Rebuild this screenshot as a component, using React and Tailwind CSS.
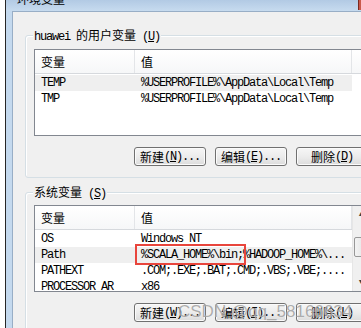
const MONO = "font-['Liberation_Mono','DejaVu_Sans_Mono',monospace] tracking-[-1.2px]";
const CJK = "font-['Noto_Sans_CJK_SC','Noto_Sans_CJK_JP',sans-serif]";

function M({ children }) {
  return <span className={MONO}>{children}</span>;
}
function C({ children }) {
  return <span className={CJK}>{children}</span>;
}

function Btn({ zh, k, dots }) {
  return (
    <div className="w-[72px] h-[19px] shrink-0 rounded-[3px] border border-[#707070] bg-gradient-to-b from-[#f6f6f6] via-[#ececec] to-[#dcdcdc] shadow-[inset_0_0_0_1px_#fbfbfb] flex items-center justify-center text-[12px] leading-none text-black">
      <C>{zh}</C>
      <M>
        {" "}(<span className="underline">{k}</span>){dots ? "..." : ""}
      </M>
    </div>
  );
}

function Header() {
  return (
    <div className="h-[24px] shrink-0 flex border-b border-[#d6d9dd] bg-gradient-to-b from-white to-[#f6f7f8]">
      <div className={`w-[100px] shrink-0 border-r border-[#e3e5e8] flex items-center pl-[6px] ${CJK}`}>变量</div>
      <div className={`w-[217px] shrink-0 border-r border-[#e3e5e8] flex items-center pl-[6px] ${CJK}`}>值</div>
      <div className="flex-1" />
    </div>
  );
}

function Row({ name, value, sel }) {
  return (
    <div className={`h-[16px] shrink-0 flex items-center ${sel ? "bg-[#efefef]" : ""} w-[317px]`}>
      <div className={`w-[100px] shrink-0 pl-[6px] whitespace-pre overflow-hidden ${MONO}`}>{name}</div>
      <div className={`w-[217px] shrink-0 pl-[6px] whitespace-pre overflow-hidden ${MONO}`}>{value}</div>
    </div>
  );
}

function GroupBox({ label, children, className = "" }) {
  return (
    <div className={`relative w-[350px] shrink-0 border border-[#d5dfe5] rounded-[3px] shadow-[inset_1px_1px_0_#ffffff] ${className}`}>
      <div className="absolute left-[7px] -top-[8px] bg-[#f0f0f0] px-px leading-[14px] text-[12px] whitespace-pre">
        {label}
      </div>
      {children}
    </div>
  );
}

export default function App() {
  return (
    <div className="relative w-[361px] h-[328px] overflow-hidden bg-white flex text-[12px] text-black">
      <div className="w-[5px] shrink-0 bg-white" />
      <div className="w-px shrink-0 bg-[#262626]" />
      <div className="flex-1 min-w-0 flex flex-col">
        <div className="h-[11px] shrink-0 flex bg-gradient-to-b from-[#b2cae4] to-[#c7dbef] overflow-hidden">
          <div className={`pl-[11px] -mt-[8px] leading-[14px] text-[12px] ${CJK}`}>环境变量</div>
          <div className="ml-auto w-[3px] h-[10px] bg-[#c9594a] border-l border-[#7a2a20]" />
        </div>
        <div className="flex-1 min-h-0 flex">
          <div className="w-[6px] shrink-0 bg-[#c4d9ee]" />
          <div className="flex-1 min-w-0 bg-[#f0f0f0] border-l border-t border-[#98aec6] pl-[12px] pt-[23px] flex flex-col overflow-hidden">
            <GroupBox
              label={
                <>
                  <M>huawei </M>
                  <C>的用户变量</C>
                  <M>
                    {" "}(<span className="underline">U</span>)
                  </M>
                </>
              }
            >
              <div className="pl-[8px] pt-[13px] pb-[11px] flex flex-col">
                <div className="h-[87px] w-[340px] border border-[#828790] bg-white flex flex-col overflow-hidden">
                  <Header />
                  <div className="pt-px flex flex-col">
                    <Row name="TEMP" value="%USERPROFILE%\AppData\Local\Temp" sel />
                    <Row name="TMP" value="%USERPROFILE%\AppData\Local\Temp" />
                  </div>
                </div>
                <div className="mt-[11px] ml-[100px] flex gap-[9px]">
                  <Btn zh="新建" k="N" dots />
                  <Btn zh="编辑" k="E" dots />
                  <Btn zh="删除" k="D" />
                </div>
              </div>
            </GroupBox>

            <GroupBox
              className="mt-[14px]"
              label={
                <>
                  <C>系统变量</C>
                  <M>
                    {" "}(<span className="underline">S</span>)
                  </M>
                </>
              }
            >
              <div className="pl-[8px] pt-[12px] pb-[11px] flex flex-col">
                <div className="h-[87px] w-[340px] border border-[#828790] bg-white flex overflow-hidden">
                  <div className="w-[317px] shrink-0 flex flex-col">
                    <Header />
                    <div className="pt-px flex flex-col">
                      <Row name="OS" value="Windows NT" />
                      <div className="relative">
                        <Row name="Path" value="%SCALA_HOME%\bin;%HADOOP_HOME%\..." sel />
                        <div className="absolute left-[100px] -top-[3px] w-[111px] h-[21px] border-2 border-[#e8453c]" />
                      </div>
                      <Row name="PATHEXT" value=".COM;.EXE;.BAT;.CMD;.VBS;.VBE;...." />
                      <Row name="PROCESSOR_AR" value="x86" />
                    </div>
                  </div>
                  <div className="w-[17px] shrink-0 bg-[#f0f0f0] border-l border-[#e6e6e6] flex flex-col">
                    <div className="h-[17px] flex items-center justify-center text-[7px] text-[#404040]">▲</div>
                    <div className="h-[14px]" />
                    <div className="h-[20px] mx-px rounded-[2px] border border-[#979797] bg-gradient-to-r from-[#f3f3f3] to-[#e1e1e1]" />
                    <div className="flex-1" />
                    <div className="h-[17px] flex items-center justify-center text-[7px] text-[#404040]">▼</div>
                  </div>
                </div>
                <div className="mt-[11px] ml-[100px] flex gap-[9px]">
                  <Btn zh="新建" k="W" dots />
                  <Btn zh="编辑" k="I" dots />
                  <Btn zh="删除" k="L" />
                </div>
              </div>
            </GroupBox>
          </div>
        </div>
      </div>
      <div className="absolute left-[178px] top-[302px] text-[17px] leading-[20px] font-['Liberation_Sans',sans-serif] text-[#8a8a8a]/70 whitespace-nowrap [text-shadow:0_0_1px_rgba(255,255,255,0.8)]">
        CSDN @qq_58166634
      </div>
    </div>
  );
}
